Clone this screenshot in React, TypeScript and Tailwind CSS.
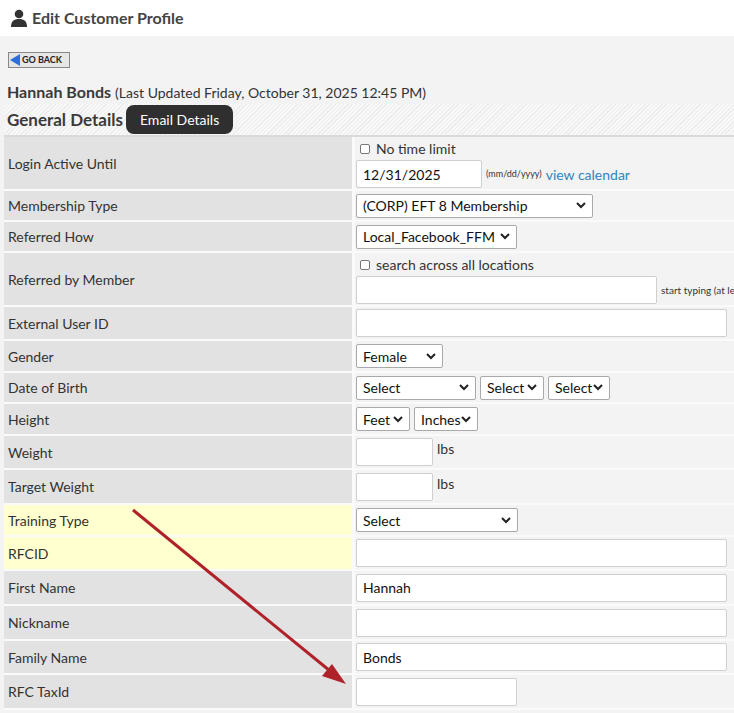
import React from "react";

const Sel = ({ w, text }: { w: string; text: string }) => (
  <div className={`${w} h-[24px] bg-white border border-[#a9a9a9] rounded-[2px] flex items-center justify-between px-[6px] text-[14px] text-[#111] shrink-0`}>
    <span>{text}</span>
    <svg width="10" height="7" viewBox="0 0 10 7"><path d="M1 1l4 4 4-4" stroke="#222" strokeWidth="2" fill="none" /></svg>
  </div>
);
const Inp = ({ w, text = "" }: { w: string; text?: string }) => (
  <div className={`${w} h-[28px] bg-white border border-[#cfcfcf] rounded-[2px] flex items-center px-[6px] text-[14px] text-[#111] shrink-0`}>{text}</div>
);

const Row = ({ label, h, yellow, children }: { label: string; h: string; yellow?: boolean; children?: React.ReactNode }) => (
  <div className={`flex ${h} border-b-2 border-[#fafafa]`}>
    <div className={`w-[348px] shrink-0 flex items-center px-[4px] text-[14px] text-[#333] ${yellow ? "bg-[#ffffd0]" : "bg-[#e2e2e2]"}`}>{label}</div>
    <div className="w-[3px] bg-[#fafafa]" />
    <div className="flex-1 bg-[#f3f3f3] flex flex-col justify-center pl-[1px] overflow-hidden">{children}</div>
  </div>
);

export default function App() {
  return (
    <div className="relative w-[734px] h-[713px] overflow-hidden bg-[#f3f3f3] font-[Lato] text-[#333]">
      <div className="bg-white h-[36px] flex items-center pl-[10px] gap-[4px]">
        <svg width="18" height="18" viewBox="0 0 18 18"><circle cx="9" cy="5" r="4.3" fill="#333" /><path d="M1 18c0-6 3-8 8-8s8 2 8 8z" fill="#333" /></svg>
        <span className="text-[16px] font-bold text-[#444]">Edit Customer Profile</span>
      </div>
      <div className="pl-[8px] pt-[16px]">
        <div className="w-[62px] h-[16px] border border-[#888] bg-[#e6e6e6] flex items-center text-[9px] font-bold text-[#222] gap-[1px]">
          <svg width="12" height="14" viewBox="0 0 12 14"><path d="M11 1L1 7l10 6z" fill="#2a6fd6" /></svg>GO BACK
        </div>
      </div>
      <div className="pl-[7px] pt-[12px] h-[36px] flex items-baseline">
        <span className="text-[16px] font-bold text-[#3a3a3a]">Hannah Bonds</span>
        <span className="text-[14px] ml-[4px]">(Last Updated Friday, October 31, 2025 12:45 PM)</span>
      </div>
      <div className="ml-[4px] h-[33px] flex items-center bg-[repeating-linear-gradient(135deg,#ececec_0px,#ececec_1px,#f8f8f8_1px,#f8f8f8_3px)] border-b-2 border-[#dadada]">
        <span className="text-[17px] font-bold text-[#3a3a3a] pl-[3px]">General Details</span>
        <span className="ml-[3px] bg-[#2f2f2f] text-white text-[14px] rounded-[8px] px-[14px] py-[4px]">Email Details</span>
      </div>
      <div className="ml-[4px]">
        <Row label="Login Active Until" h="h-[54px]">
          <div className="flex items-center gap-[6px] pl-[4px] text-[14px]"><span className="w-[10px] h-[10px] border border-[#777] bg-white rounded-[2px]" />No time limit</div>
          <div className="flex items-center gap-[4px] mt-[1px]"><Inp w="w-[126px]" text="12/31/2025" /><span className="text-[9px]">(mm/dd/yyyy)</span><span className="text-[14px] text-[#2e86c1]">view calendar</span></div>
        </Row>
        <Row label="Membership Type" h="h-[31px]"><Sel w="w-[237px]" text="(CORP) EFT 8 Membership" /></Row>
        <Row label="Referred How" h="h-[31px]"><Sel w="w-[161px]" text="Local_Facebook_FFM" /></Row>
        <Row label="Referred by Member" h="h-[54px]">
          <div className="flex items-center gap-[6px] pl-[4px] text-[14px]"><span className="w-[10px] h-[10px] border border-[#777] bg-white rounded-[2px]" />search across all locations</div>
          <div className="flex items-center gap-[4px] mt-[1px]"><Inp w="w-[301px]" /><span className="text-[10px] whitespace-nowrap">start typing (at lea</span></div>
        </Row>
        <Row label="External User ID" h="h-[34px]"><Inp w="w-[371px]" /></Row>
        <Row label="Gender" h="h-[32px]"><Sel w="w-[87px]" text="Female" /></Row>
        <Row label="Date of Birth" h="h-[31px]"><div className="flex gap-[4px]"><Sel w="w-[120px]" text="Select" /><Sel w="w-[64px]" text="Select" /><Sel w="w-[62px]" text="Select" /></div></Row>
        <Row label="Height" h="h-[32px]"><div className="flex gap-[4px]"><Sel w="w-[54px]" text="Feet" /><Sel w="w-[64px]" text="Inches" /></div></Row>
        <Row label="Weight" h="h-[34px]"><div className="flex items-start gap-[4px]"><Inp w="w-[77px]" /><span className="text-[14px]">lbs</span></div></Row>
        <Row label="Target Weight" h="h-[35px]"><div className="flex items-start gap-[4px]"><Inp w="w-[77px]" /><span className="text-[14px]">lbs</span></div></Row>
        <Row label="Training Type" h="h-[32px]" yellow><Sel w="w-[162px]" text="Select" /></Row>
        <Row label="RFCID" h="h-[34px]" yellow><Inp w="w-[371px]" /></Row>
        <Row label="First Name" h="h-[35px]"><Inp w="w-[371px]" text="Hannah" /></Row>
        <Row label="Nickname" h="h-[35px]"><Inp w="w-[371px]" /></Row>
        <Row label="Family Name" h="h-[34px]"><Inp w="w-[371px]" text="Bonds" /></Row>
        <Row label="RFC TaxId" h="h-[35px]"><Inp w="w-[161px]" /></Row>
      </div>
      <svg className="absolute left-0 top-0 pointer-events-none" width="734" height="713">
        <line x1="133" y1="510" x2="335" y2="675" stroke="#b0222a" strokeWidth="3" />
        <path d="M346 684 L322 676 L332 664 Z" fill="#b0222a" />
      </svg>
    </div>
  );
}
